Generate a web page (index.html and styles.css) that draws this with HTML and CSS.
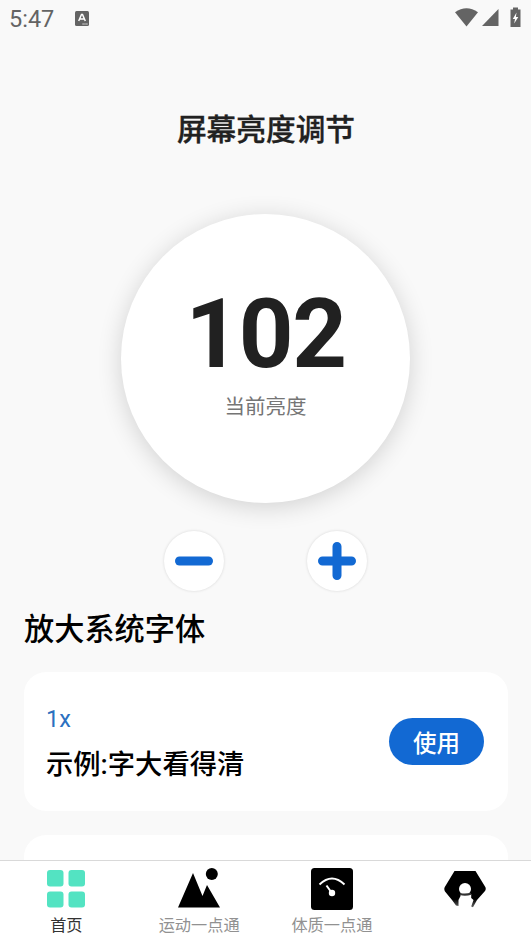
FILE: index.html
```html
<!DOCTYPE html>
<html lang="zh-CN">
<head>
<meta charset="utf-8">
<meta name="viewport" content="width=device-width, initial-scale=1">
<title>屏幕亮度调节</title>
<link rel="stylesheet" href="styles.css">
</head>
<body>
<div class="app">
  <header class="status">
    <span class="clock">5:47</span>
    <svg class="input-icon" width="14" height="15" viewBox="0 0 14 15"><rect width="14" height="15" rx="1.5" fill="#646464"/><path d="M3.7 10 6.5 3.5h1L10.3 10M5 8h4" fill="none" stroke="#fff" stroke-width="1.5"/><path d="M7.5 13h5" stroke="#fff" stroke-width="1" stroke-dasharray="1.2 .7"/></svg>
    <svg class="signals" width="67" height="20" viewBox="0 0 67 20"><g fill="#646464"><path d="M0 4.200Q11.500-3.800 23 4.200L11.500 18.500Z"/><path d="M43.500 1v17H27Z"/><path d="M58-1h5v2h2.500V18.500h-10V1H58Z" transform="translate(0 .5)"/></g><path d="M61.500 4.500 57.800 11h2.200l-.8 4.500L63.300 9h-2.400Z" fill="#fff"/></svg>
  </header>
  <main class="content">
    <h1 class="title">屏幕亮度调节</h1>
    <section class="dial">
      <div class="level">102</div>
      <div class="caption">当前亮度</div>
    </section>
    <div class="controls">
      <button class="round" aria-label="降低亮度"><svg width="38" height="38" viewBox="0 0 38 38"><path d="M4.500 19h29"/></svg></button>
      <button class="round" aria-label="提高亮度"><svg width="38" height="38" viewBox="0 0 38 38"><path d="M4.500 19h29M19 4.500v29"/></svg></button>
    </div>
    <h2 class="heading">放大系统字体</h2>
    <div class="cards">
      <article class="card">
        <div class="sample">
          <div class="scale">1x</div>
          <div class="example">示例:字大看得清</div>
        </div>
        <button class="use">使用</button>
      </article>
      <article class="card"></article>
    </div>
  </main>
  <nav class="tabs">
    <a class="tab active">
      <svg width="42" height="42" viewBox="0 0 42 42" fill="#53e3c2"><rect x="2" y="2" width="16.500" height="16.500" rx="3"/><rect x="23.500" y="2" width="16.500" height="16.500" rx="3"/><rect x="2" y="23.500" width="16.500" height="16" rx="3"/><rect x="23.500" y="23.500" width="16.500" height="16" rx="3"/></svg>
      <span>首页</span>
    </a>
    <a class="tab">
      <svg width="42" height="42" viewBox="0 0 42 42"><path d="M0 39.500 15 5l9.500 23L29 17l13 22.500Z"/><circle cx="33.800" cy="6" r="6"/></svg>
      <span>运动一点通</span>
    </a>
    <a class="tab">
      <svg width="42" height="42" viewBox="0 0 42 42"><rect width="42" height="42" rx="3.500"/><path d="M8.500 16.500Q21 4.500 33.500 16.500" fill="none" stroke="#fff" stroke-width="1.900"/><path d="m15.500 17.500 5 7" stroke="#fff" stroke-width="2"/><circle cx="21" cy="25" r="3.200" fill="#fff"/></svg>
      <span>体质一点通</span>
    </a>
    <a class="tab">
      <svg width="42" height="42" viewBox="0 0 42 42"><defs><linearGradient id="fade" x1="0" y1="0" x2="0" y2="1"><stop offset=".78"/><stop offset="1" stop-color="#000" stop-opacity=".6"/></linearGradient></defs><path fill="url(#fade)" d="M10.500 3h21L41.300 19q1 2-.3 4l-8 9L29 39.300 27.200 38.500l2.300-6.500-2.300-2V26H16.500v2L14.500 32v6L12 37.500 8 32 1 23.500Q-.3 21 .8 19Z"/><circle cx="21" cy="21" r="6" fill="#fff"/><path d="M16 26q5.500 1.200 11-.3" fill="none" stroke="#333" stroke-width="2.200"/></svg>
    </a>
  </nav>
</div>
</body>
</html>
```
FILE: styles.css
```css
* { box-sizing: border-box; }

body {
  margin: 0;
  background: #f9f9f9;
  color: #000;
  font-family: Roboto, "Noto Sans CJK SC", sans-serif;
}

.app {
  display: flex;
  flex-direction: column;
  height: 945px;
  overflow: hidden;
}

.status {
  display: flex;
  flex: none;
  align-items: center;
  height: 38px;
  padding: 0 9px 0 9px;
  color: #646464;
}

.clock { width: 66px; font-size: 23.5px; line-height: 38px; }
.input-icon { margin-bottom: 2px; }
.signals { margin-left: auto; margin-bottom: 2px; overflow: visible; }

.content {
  flex: 1;
  min-height: 0;
  overflow: hidden;
}

.title {
  margin: 69px 0 0 1px;
  color: #212121;
  font-size: 29.7px;
  font-weight: 500;
  line-height: 46px;
  text-align: center;
  -webkit-text-stroke: .35px #212121;
}

.dial {
  width: 289px;
  height: 289px;
  margin: 61px auto 0;
  padding-top: 64px;
  border-radius: 50%;
  background: #fff;
  box-shadow: 0 4px 24px rgba(0, 0, 0, .16);
  text-align: center;
}

.level {
  color: #212121;
  font-size: 95.5px;
  font-weight: 700;
  letter-spacing: -1.5px;
  line-height: 112px;
}

.caption {
  margin-top: 2px;
  color: #757575;
  font-size: 20.5px;
  line-height: 30px;
}

.controls {
  display: flex;
  justify-content: center;
  gap: 83px;
  margin-top: 28px;
}

.round {
  display: grid;
  place-items: center;
  width: 60px;
  height: 60px;
  padding: 0;
  border: 0;
  border-radius: 50%;
  background: #fff;
  box-shadow: 0 0 3px rgba(0, 0, 0, .14);
}

.round path {
  fill: none;
  stroke: #1269d3;
  stroke-width: 9;
  stroke-linecap: round;
}

.heading {
  margin: 17px 24px 0;
  font-size: 30.2px;
  font-weight: 500;
  line-height: 44px;
}

.cards {
  display: grid;
  gap: 24px;
  margin: 20px 23px 0 24px;
}

.card {
  display: flex;
  align-items: center;
  justify-content: space-between;
  height: 138.500px;
  padding: 0 24px 0 22px;
  border-radius: 22px;
  background: #fff;
}

.sample { padding-top: 4px; }

.scale {
  color: #2b70c0;
  font-size: 23.5px;
  line-height: 44px;
}

.example {
  font-size: 27.3px;
  font-weight: 500;
  line-height: 48px;
}

.use {
  width: 95px;
  height: 47px;
  padding: 1px 0 0;
  border: 0;
  border-radius: 24px;
  background: #1269d3;
  color: #fff;
  font-family: inherit;
  font-size: 23.5px;
  font-weight: 500;
}

.tabs {
  display: grid;
  flex: none;
  grid-template-columns: repeat(4, 1fr);
  height: 85px;
  border-top: 1px solid #d9d9d9;
  background: #fff;
}

.tab {
  display: flex;
  flex-direction: column;
  align-items: center;
  gap: 2px;
  padding-top: 7px;
  color: #919191;
  font-size: 16.200px;
  line-height: 28px;
}

.tab.active { color: #333; }
```
